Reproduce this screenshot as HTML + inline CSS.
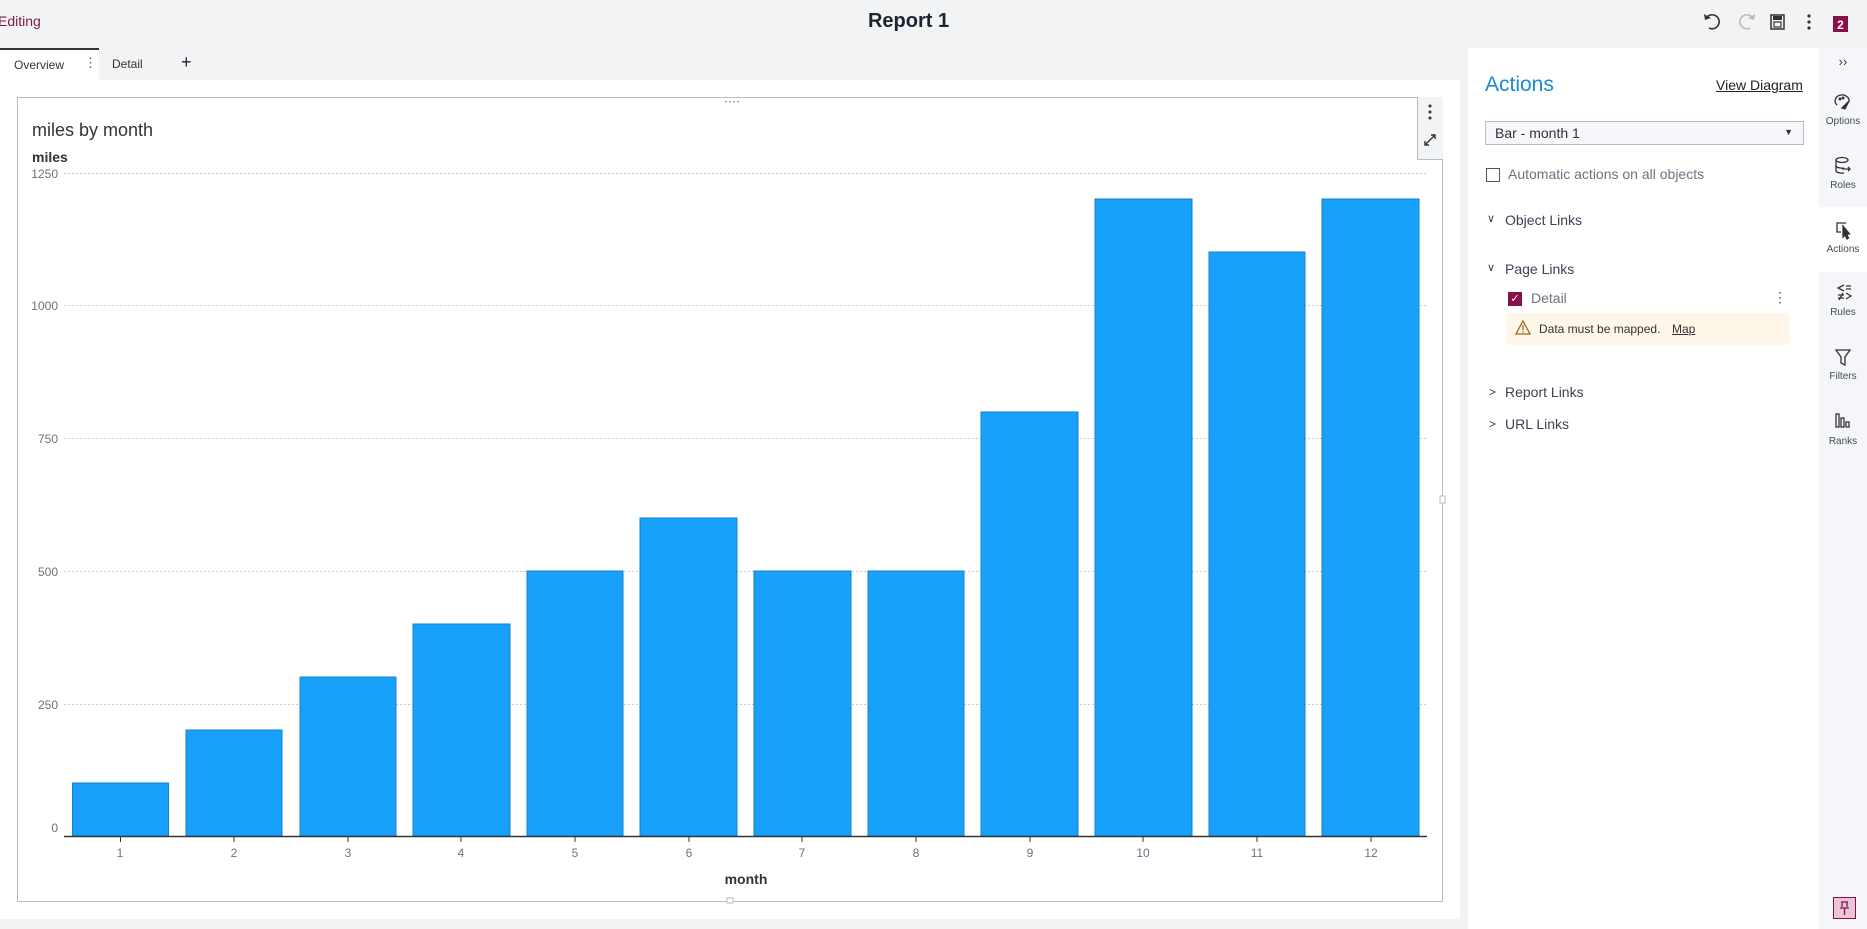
<!DOCTYPE html>
<html><head><meta charset="utf-8"><style>
*{margin:0;padding:0;box-sizing:border-box}
body{width:1867px;height:929px;overflow:hidden;background:#f2f3f5;font-family:"Liberation Sans",sans-serif;position:relative;color:#2b2f38}
.a{position:absolute}
.side{font-size:10px;color:#454b57;text-align:center;width:48px;left:1819px}
.pl{font-size:14px;color:#3b4252}
</style></head><body>
<div class="a" style="left:-2px;top:13px;font-size:14px;color:#7d1a45">Editing</div>
<div class="a" style="left:0;width:1867px;top:10px;text-align:center;font-size:20px;font-weight:bold;color:#1d2430;padding-right:50px">Report 1</div>
<svg class="a" style="left:1700px;top:10px" width="160" height="24" viewBox="0 0 160 24">
<path d="M7 7 A7 7 0 1 1 9 18" fill="none" stroke="#333" stroke-width="1.6"/><path d="M4 4 L5 10 L11 8 Z" fill="#333"/>
<path d="M52 7 A7 7 0 1 0 50 18" fill="none" stroke="#bbb" stroke-width="1.6"/><path d="M55 4 L54 10 L48 8 Z" fill="#bbb"/>
<rect x="71" y="5" width="13" height="14" fill="none" stroke="#333" stroke-width="1.5"/><rect x="73" y="6" width="9" height="4" fill="#333"/><rect x="74" y="12" width="7" height="5" fill="none" stroke="#333" stroke-width="1.2"/>
<circle cx="109" cy="6" r="1.6" fill="#333"/><circle cx="109" cy="12" r="1.6" fill="#333"/><circle cx="109" cy="18" r="1.6" fill="#333"/>
<rect x="133" y="6" width="15" height="16" fill="#8a0e4a"/><text x="140.5" y="19" font-size="12" font-weight="bold" fill="#fff" text-anchor="middle" font-family="Liberation Sans">2</text>
</svg>
<div class="a" style="left:0;top:48px;width:99px;height:32px;background:#fff;border-top:2px solid #333"></div>
<div class="a" style="left:14px;top:58px;font-size:12px;color:#333">Overview</div>
<div class="a" style="left:84px;top:55px;font-size:13px;color:#555">⋮</div>
<div class="a" style="left:112px;top:57px;font-size:12px;color:#333">Detail</div>
<div class="a" style="left:181px;top:52px;font-size:18px;color:#223">+</div>
<div class="a" style="left:0;top:80px;width:1460px;height:839px;background:#fff"></div>
<div class="a" style="left:17px;top:97px;width:1426px;height:805px;border:1px solid #b5bcc6"></div>
<div class="a" style="left:724px;top:97px;font-size:12px;color:#444;line-height:8px">····</div>
<div class="a" style="left:1417px;top:97px;width:26px;height:63px;background:#f2f3f5;border-left:1px solid #b5bcc6;border-bottom:1px solid #b5bcc6"></div>
<svg class="a" style="left:1417px;top:97px" width="26" height="63"><circle cx="13" cy="9" r="1.5" fill="#333"/><circle cx="13" cy="15" r="1.5" fill="#333"/><circle cx="13" cy="21" r="1.5" fill="#333"/><path d="M8 48 L18 38 M14 38 H18 V42 M8 44 V48 H12" stroke="#333" stroke-width="1.4" fill="none"/></svg>
<div class="a" style="left:32px;top:120px;font-size:18px;color:#333">miles by month</div>
<div class="a" style="left:32px;top:149px;font-size:14px;font-weight:bold;color:#333">miles</div>
<svg class="a" style="left:0;top:0" width="1460" height="929" font-family="Liberation Sans">
<g stroke="#c8c8c8" stroke-dasharray="2,2" stroke-width="1">
<line x1="64" y1="173.5" x2="1427" y2="173.5"/><line x1="64" y1="305.5" x2="1427" y2="305.5"/><line x1="64" y1="438.5" x2="1427" y2="438.5"/><line x1="64" y1="571.5" x2="1427" y2="571.5"/><line x1="64" y1="704.5" x2="1427" y2="704.5"/></g>
<g font-size="12" fill="#6b7280" text-anchor="end"><text x="58" y="178">1250</text><text x="58" y="310">1000</text><text x="58" y="443">750</text><text x="58" y="576">500</text><text x="58" y="709">250</text><text x="58" y="832">0</text></g>
<g fill="#18a1fa" stroke="#1580cc" stroke-width="1">
<rect x="72.5" y="783" width="96" height="53"/>
<rect x="186" y="730" width="96" height="106"/>
<rect x="300" y="677" width="96" height="159"/>
<rect x="413" y="624" width="97" height="212"/>
<rect x="527" y="571" width="96" height="265"/>
<rect x="640" y="518" width="97" height="318"/>
<rect x="754" y="571" width="97" height="265"/>
<rect x="868" y="571" width="96" height="265"/>
<rect x="981" y="412" width="97" height="424"/>
<rect x="1095" y="199" width="97" height="637"/>
<rect x="1209" y="252" width="96" height="584"/>
<rect x="1322" y="199" width="97" height="637"/></g>
<line x1="64" y1="836.5" x2="1427" y2="836.5" stroke="#333" stroke-width="1.5"/>
<g stroke="#333"><line x1="120.5" y1="837" x2="120.5" y2="842"/><line x1="234" y1="837" x2="234" y2="842"/><line x1="348" y1="837" x2="348" y2="842"/><line x1="461" y1="837" x2="461" y2="842"/><line x1="575" y1="837" x2="575" y2="842"/><line x1="689" y1="837" x2="689" y2="842"/><line x1="802" y1="837" x2="802" y2="842"/><line x1="916" y1="837" x2="916" y2="842"/><line x1="1030" y1="837" x2="1030" y2="842"/><line x1="1143" y1="837" x2="1143" y2="842"/><line x1="1257" y1="837" x2="1257" y2="842"/><line x1="1371" y1="837" x2="1371" y2="842"/></g>
<g font-size="12" fill="#6b7280" text-anchor="middle"><text x="120" y="857">1</text><text x="234" y="857">2</text><text x="348" y="857">3</text><text x="461" y="857">4</text><text x="575" y="857">5</text><text x="689" y="857">6</text><text x="802" y="857">7</text><text x="916" y="857">8</text><text x="1030" y="857">9</text><text x="1143" y="857">10</text><text x="1257" y="857">11</text><text x="1371" y="857">12</text></g>
<text x="746" y="884" font-size="14" font-weight="bold" fill="#333" text-anchor="middle">month</text>
<rect x="727" y="898" width="6" height="5" fill="#fff" stroke="#b5bcc6"/>
<rect x="1440" y="496" width="5" height="7" fill="#fff" stroke="#b5bcc6"/>
</svg>
<div class="a" style="left:1468px;top:48px;width:351px;height:881px;background:#fff"></div>
<div class="a" style="left:1485px;top:73px;font-size:21px;color:#1a8bd8">Actions</div>
<div class="a" style="left:1716px;top:77px;font-size:14px;color:#222;text-decoration:underline">View Diagram</div>
<div class="a" style="left:1485px;top:121px;width:319px;height:24px;background:#f5f7fa;border:1px solid #b5bcc6;font-size:14px;padding:3px 9px;color:#333">Bar - month 1<span style="position:absolute;right:10px;top:5px;font-size:9px">▼</span></div>
<div class="a" style="left:1486px;top:168px;width:14px;height:14px;border:1.5px solid #555"></div>
<div class="a" style="left:1508px;top:166px;font-size:14px;color:#6b7280">Automatic actions on all objects</div>
<div class="a pl" style="left:1487px;top:212px;font-size:11px">∨</div><div class="a pl" style="left:1505px;top:212px">Object Links</div>
<div class="a pl" style="left:1487px;top:261px;font-size:11px">∨</div><div class="a pl" style="left:1505px;top:261px">Page Links</div>
<div class="a" style="left:1508px;top:292px;width:14px;height:14px;background:#8a0e4a;color:#fff;font-size:11px;text-align:center;line-height:14px">✓</div>
<div class="a" style="left:1531px;top:290px;font-size:14px;color:#6b7280">Detail</div>
<div class="a" style="left:1773px;top:289px;font-size:14px;color:#7a4a2a">⋮</div>
<div class="a" style="left:1507px;top:313px;width:282px;height:32px;background:#fff6ea;border-radius:3px"></div>
<svg class="a" style="left:1515px;top:320px" width="16" height="15"><path d="M8 1 L15 14 H1 Z" fill="none" stroke="#9a6a1a" stroke-width="1.3"/><line x1="8" y1="5" x2="8" y2="10" stroke="#9a6a1a" stroke-width="1.3"/><circle cx="8" cy="12" r=".8" fill="#9a6a1a"/></svg>
<div class="a" style="left:1539px;top:322px;font-size:12px;color:#333">Data must be mapped.</div>
<div class="a" style="left:1672px;top:322px;font-size:12px;color:#333;text-decoration:underline">Map</div>
<div class="a pl" style="left:1489px;top:385px;font-size:12px">&gt;</div><div class="a pl" style="left:1505px;top:384px">Report Links</div>
<div class="a pl" style="left:1489px;top:417px;font-size:12px">&gt;</div><div class="a pl" style="left:1505px;top:416px">URL Links</div>
<div class="a" style="left:1819px;top:48px;width:48px;height:881px;background:#f5f6f9"></div>
<div class="a" style="left:1819px;top:207px;width:48px;height:65px;background:#fff"></div>
<div class="a side" style="top:54px;font-size:13px;color:#333">››</div>
<svg class="a" style="left:1819px;top:0" width="48" height="460" fill="none" stroke="#333" stroke-width="1.3">
<g transform="translate(0,93)"><path d="M18 12 A7 6 0 1 1 30 9"/><circle cx="21" cy="6" r=".8" fill="#333"/><circle cx="24" cy="5" r=".8" fill="#333"/><path d="M23 15 L30 8 L26 16Z" fill="#333"/></g>
<g transform="translate(0,157)"><ellipse cx="23" cy="3" rx="6" ry="2.5"/><path d="M17 3 V14 A6 2.5 0 0 0 25 16 M17 9 A6 2.5 0 0 0 25 11 M23 12 H31 M29 10 L31 12 L29 14"/></g>
<g transform="translate(0,221)"><path d="M27 2 H18 V11 H22"/><path d="M24 5 L24 16 L26 14 L28 18 L29.5 17 L27.5 13 L30.5 13 Z" fill="#333"/></g>
<g transform="translate(0,284)"><path d="M25 1 L19 4 L25 7 M27 2 H32 M27 5 H32 M19 11 H25 M19 14 H25 M24 9 L20 16 M27 9 L32 12 L27 15"/></g>
<g transform="translate(0,349)"><path d="M17 1 H31 L26 8 V16 L22 14 V8 Z"/></g>
<g transform="translate(0,413)"><rect x="17" y="1" width="3" height="13"/><rect x="22" y="5" width="3" height="9"/><rect x="27" y="9" width="3" height="5"/></g>
</svg>
<div class="a side" style="top:116px">Options</div>
<div class="a side" style="top:180px">Roles</div>
<div class="a side" style="top:244px">Actions</div>
<div class="a side" style="top:307px">Rules</div>
<div class="a side" style="top:371px">Filters</div>
<div class="a side" style="top:436px">Ranks</div>
<div class="a" style="left:1833px;top:897px;width:23px;height:22px;background:#e8c8d8;border:1.5px solid #8a0e4a"></div>
<svg class="a" style="left:1833px;top:897px" width="23" height="22"><path d="M8 5 H15 M9 5 V10 M14 5 V10 M7 11 H16 M11.5 11 V18" stroke="#8a0e4a" stroke-width="1.3" fill="none"/></svg>
</body></html>
